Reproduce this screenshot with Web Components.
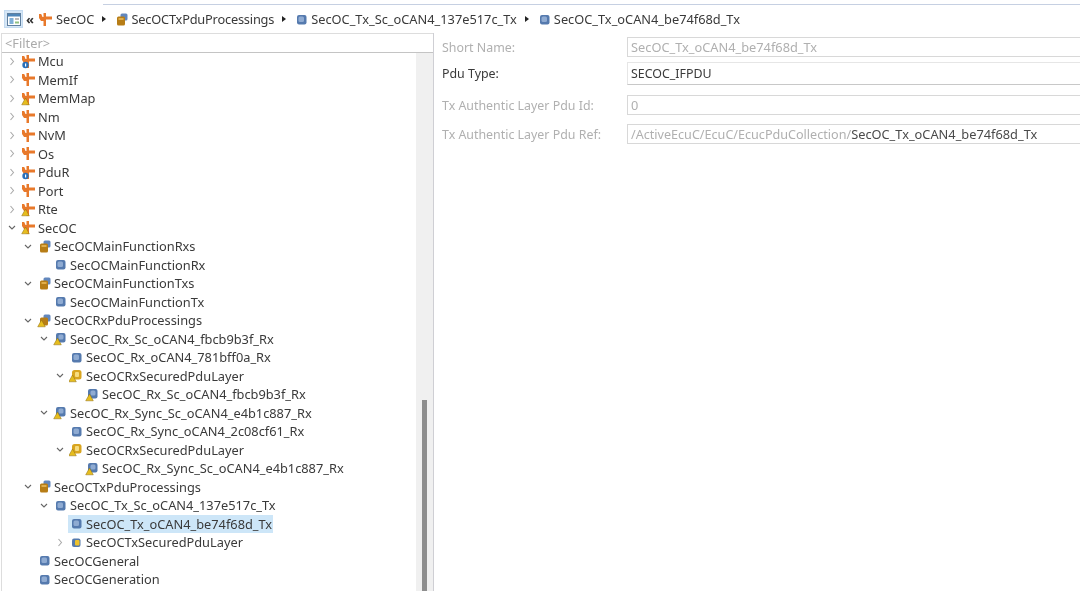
<!DOCTYPE html>
<html>
<head>
<meta charset="utf-8">
<style>
html, body { margin: 0; height: 100%; background: #fff; overflow: hidden; }
body { font: 12.8px "Noto Sans", "Liberation Sans", sans-serif; color: #3a3a3a; }
</style>
</head>
<body>
<ecu-editor></ecu-editor>

<script>
// アイコン定義
const fork = '<path d="M1 2H3.200L4.500 5H5.500V1H8V4.500H14V7.500H8V14H5.500V9H3L1 6Z" fill="#e8792b"/>';
const warn = (x = 0, y = 7) => `<path d="M${x + 3.500} ${y}l3.800 6.800h-7.600z" fill="#e6bd1e" stroke="#8c6c12" stroke-width=".5"/>`;
const cube = '<rect x="3" y="3" width="9.500" height="9.500" rx="2" fill="#557aae"/><rect x="4.500" y="4.500" width="5.500" height="5.500" rx="1.500" fill="#8fabd2"/>';
const ICONS = {
  module: fork,
  'module-info': fork + '<circle cx="4.500" cy="11" r="3.200" fill="#2a6fb8"/><rect x="4" y="9.500" width="1.200" height="3" fill="#fff"/>',
  'module-warn': fork + warn(1, 7),
  group: '<rect x="6.500" y="1.500" width="7" height="7" rx="1.500" fill="#6287bd"/><rect x="3" y="4.500" width="8" height="9" rx="1.500" fill="#b77d16"/><rect x="4.500" y="6" width="5" height="2" fill="#e0ae4c"/>',
  'group-warn': '<rect x="6.500" y="1.500" width="7" height="7" rx="1.500" fill="#6287bd"/><rect x="3" y="4.500" width="8" height="8" rx="1.500" fill="#b77d16"/>' + warn(1, 7),
  item: cube,
  'item-warn': '<rect x="3" y="2" width="9.500" height="9.500" rx="2" fill="#557aae"/><rect x="5.500" y="3.500" width="5" height="5" rx="1.500" fill="#8fabd2"/>' + warn(1, 7),
  'layer-warn': '<rect x="3" y="2" width="9.500" height="9.500" rx="2.500" fill="#d9a520"/><rect x="6" y="4" width="4" height="5" rx="1" fill="#f7dd80"/>' + warn(0, 7),
  layer: '<rect x="3" y="3.500" width="8.500" height="8.500" rx="2" fill="#557aae"/><rect x="6" y="5" width="4.500" height="5.500" rx="1" fill="#eec22c"/>'
};

class NodeIcon extends HTMLElement {
  connectedCallback() {
    if (this.shadowRoot) return;
    this.attachShadow({ mode: 'open' });
    const name = this.getAttribute('name') || 'item';
    this.shadowRoot.innerHTML = `
      <style>
        :host { display: inline-flex; width: 15px; height: 15px; flex: none; }
        svg { width: 15px; height: 15px; }
      </style>
      <svg viewBox="0 0 15 15">${ICONS[name]}</svg>`;
  }
}
customElements.define('node-icon', NodeIcon);

class CrumbItem extends HTMLElement {
  connectedCallback() {
    if (this.shadowRoot) return;
    this.attachShadow({ mode: 'open' });
    const name = this.getAttribute('icon');
    this.shadowRoot.innerHTML = `
      <style>
        :host { display: inline-flex; align-items: center; gap: 2px; }
        :host([icon="module"]) { gap: 3px; }
        :host([icon="group"]) { letter-spacing: -.2px; }
      </style>
      <node-icon name="${name}"></node-icon><slot></slot>`;
  }
}
customElements.define('crumb-item', CrumbItem);

const crumbTemplate = document.createElement('template');
crumbTemplate.innerHTML = `
<style>
:host { display: block; height: 33px; box-sizing: border-box; color: #3a3a3a; }
.rule { height: 1px; margin: 4px 0 0 103px; background: #c6d0e2; }
.bar { display: flex; align-items: center; height: 28px; padding-left: 4px; }
.toggle { width: 19px; height: 18px; box-sizing: border-box; background: #d5e6f6; border: 1px solid #c3daf0; display: flex; align-items: center; justify-content: center; margin-right: 3px; }
.back { font-size: 13px; font-weight: 700; margin-right: 4px; color: #333; }
.sep { width: 0; height: 0; border-left: 4px solid #222; border-top: 3px solid transparent; border-bottom: 3px solid transparent; margin: 0 8px; }
</style>
<div class="rule"></div>
<div class="bar">
  <span class="toggle">
    <svg width="14" height="13" viewBox="0 0 14 13"><rect x=".5" y=".5" width="13" height="12" fill="#fff" stroke="#5f7f9f"/><rect x="1" y="1" width="12" height="2.500" fill="#4f86b8"/><rect x="2.500" y="5" width="4" height="6" fill="#7fb0d8"/><rect x="8" y="5" width="4" height="2" fill="#bbb"/><rect x="8" y="8.500" width="4" height="2" fill="#8fbf80"/></svg>
  </span>
  <span class="back">«</span>
  <crumb-item icon="module">SecOC</crumb-item><span class="sep"></span>
  <crumb-item icon="group">SecOCTxPduProcessings</crumb-item><span class="sep"></span>
  <crumb-item icon="item">SecOC_Tx_Sc_oCAN4_137e517c_Tx</crumb-item><span class="sep"></span>
  <crumb-item icon="item">SecOC_Tx_oCAN4_be74f68d_Tx</crumb-item>
</div>`;

class CrumbBar extends HTMLElement {
  constructor() {
    super();
    this.attachShadow({ mode: 'open' });
    this.shadowRoot.appendChild(crumbTemplate.content.cloneNode(true));
  }
}
customElements.define('crumb-bar', CrumbBar);

class TreeRow extends HTMLElement {
  connectedCallback() {
    if (this.shadowRoot) return;
    this.attachShadow({ mode: 'open' });
    const depth = Number(this.getAttribute('depth') || 0);
    const state = this.getAttribute('state') || '';
    const icon = this.getAttribute('icon');
    const chevron = state === 'open'
      ? '<path d="M1 3l3 3 3-3" fill="none" stroke="#666" stroke-width="1.100"/>'
      : state === 'closed'
        ? '<path d="M2.500 1l3 3.500-3 3.500" fill="none" stroke="#aaa" stroke-width="1.100"/>'
        : '';
    this.shadowRoot.innerHTML = `
      <style>
        :host { display: flex; align-items: center; height: 18.5px; padding-left: ${8 + depth * 16}px; white-space: nowrap; }
        .tw { width: 8px; height: 9px; flex: none; margin: 0 4px 0 -2px; }
        .cell { display: flex; align-items: center; gap: 2px; height: 18px; padding: 0 1px; }
        :host([selected]) .cell { background: #cde6f8; }
      </style>
      <svg class="tw" viewBox="0 0 8 9">${chevron}</svg>
      <div class="cell"><node-icon name="${icon}"></node-icon><slot></slot></div>`;
  }
}
customElements.define('tree-row', TreeRow);

// ツリーの内容
const TREE = [
  [0, 'closed', 'module-info', 'Mcu'],
  [0, 'closed', 'module', 'MemIf'],
  [0, 'closed', 'module-warn', 'MemMap'],
  [0, 'closed', 'module', 'Nm'],
  [0, 'closed', 'module', 'NvM'],
  [0, 'closed', 'module', 'Os'],
  [0, 'closed', 'module-info', 'PduR'],
  [0, 'closed', 'module', 'Port'],
  [0, 'closed', 'module-warn', 'Rte'],
  [0, 'open', 'module-warn', 'SecOC'],
  [1, 'open', 'group', 'SecOCMainFunctionRxs'],
  [2, '', 'item', 'SecOCMainFunctionRx'],
  [1, 'open', 'group', 'SecOCMainFunctionTxs'],
  [2, '', 'item', 'SecOCMainFunctionTx'],
  [1, 'open', 'group-warn', 'SecOCRxPduProcessings'],
  [2, 'open', 'item-warn', 'SecOC_Rx_Sc_oCAN4_fbcb9b3f_Rx'],
  [3, '', 'item', 'SecOC_Rx_oCAN4_781bff0a_Rx'],
  [3, 'open', 'layer-warn', 'SecOCRxSecuredPduLayer'],
  [4, '', 'item-warn', 'SecOC_Rx_Sc_oCAN4_fbcb9b3f_Rx'],
  [2, 'open', 'item-warn', 'SecOC_Rx_Sync_Sc_oCAN4_e4b1c887_Rx'],
  [3, '', 'item', 'SecOC_Rx_Sync_oCAN4_2c08cf61_Rx'],
  [3, 'open', 'layer-warn', 'SecOCRxSecuredPduLayer'],
  [4, '', 'item-warn', 'SecOC_Rx_Sync_Sc_oCAN4_e4b1c887_Rx'],
  [1, 'open', 'group', 'SecOCTxPduProcessings'],
  [2, 'open', 'item', 'SecOC_Tx_Sc_oCAN4_137e517c_Tx'],
  [3, '', 'item', 'SecOC_Tx_oCAN4_be74f68d_Tx', true],
  [3, 'closed', 'layer', 'SecOCTxSecuredPduLayer'],
  [1, '', 'item', 'SecOCGeneral'],
  [1, '', 'item', 'SecOCGeneration'],
];

class TreePane extends HTMLElement {
  constructor() {
    super();
    this.attachShadow({ mode: 'open' });
    this.shadowRoot.innerHTML = `
      <style>
        :host { display: flex; flex-direction: column; width: 433px; height: 100%; flex: none; box-sizing: border-box; border-left: 1px solid #ddd; border-right: 1px solid #cfcfd4; margin-left: 1px; overflow: hidden; }
        .filter { height: 18px; flex: none; border-top: 1px solid #ddd; border-bottom: 1px solid #c4c4c4; color: #aaa; padding-left: 3px; line-height: 18px; }
        .body { flex: 1; display: flex; min-height: 0; }
        .rows { flex: 1; overflow: hidden; margin-top: -1px; }
        .track { width: 17px; flex: none; background: #f0f0f0; padding: 347px 0 0 6px; box-sizing: border-box; }
        .thumb { width: 5px; height: 300px; background: #8e8e8e; }
      </style>
      <div class="filter">&lt;Filter&gt;</div>
      <div class="body">
        <div class="rows"></div>
        <div class="track"><div class="thumb"></div></div>
      </div>`;
    const rows = this.shadowRoot.querySelector('.rows');
    for (const [depth, state, icon, text, selected] of TREE) {
      const row = document.createElement('tree-row');
      row.setAttribute('depth', depth);
      row.setAttribute('state', state);
      row.setAttribute('icon', icon);
      if (selected) row.setAttribute('selected', '');
      row.textContent = text;
      rows.append(row);
    }
  }
}
customElements.define('tree-pane', TreePane);

class FormField extends HTMLElement {
  connectedCallback() {
    if (this.shadowRoot) return;
    this.attachShadow({ mode: 'open' });
    const h = this.getAttribute('h');
    this.shadowRoot.innerHTML = `
      <style>
        :host { display: grid; grid-template-columns: 185px 1fr; align-items: center; height: ${h}px; color: #b0b0b0; }
        :host([active]) { color: #3a3a3a; }
        .label { font-size: 12.4px; }
        .box { display: flex; align-items: center; height: 100%; box-sizing: border-box; border: 1px solid #d8d8d8; border-right: 0; padding-left: 3px; white-space: pre; }
        :host([active]) .box { border-color: #e6e6e6; border-bottom-color: #c8c8c8; font-size: 12.4px; }
      </style>
      <div class="label">${this.getAttribute('label')}</div>
      <div class="box"><slot></slot></div>`;
  }
}
customElements.define('form-field', FormField);

class RefPath extends HTMLElement {
  connectedCallback() {
    if (this.shadowRoot) return;
    this.attachShadow({ mode: 'open' });
    this.shadowRoot.innerHTML = `
      <style>
        :host { display: inline-flex; align-items: baseline; }
        .last { color: #4a4a4a; }
        .pre { font-size: 12.6px; }
      </style>
      <span class="pre">${this.getAttribute('prefix')}</span><span class="last"><slot></slot></span>`;
  }
}
customElements.define('ref-path', RefPath);

class FormPane extends HTMLElement {
  constructor() {
    super();
    this.attachShadow({ mode: 'open' });
    this.shadowRoot.innerHTML = `
      <style>
        :host { display: flex; flex-direction: column; flex: 1; min-width: 0; padding: 4px 0 0 8px; }
        .pdu { margin-top: 5px; }
        .id { margin-top: 10px; }
        .ref { margin-top: 9px; }
      </style>
      <form-field label="Short Name:" h="20">SecOC_Tx_oCAN4_be74f68d_Tx</form-field>
      <form-field class="pdu" label="Pdu Type:" h="23" active>SECOC_IFPDU</form-field>
      <form-field class="id" label="Tx Authentic Layer Pdu Id:" h="20">0</form-field>
      <form-field class="ref" label="Tx Authentic Layer Pdu Ref:" h="20"><ref-path prefix="/ActiveEcuC/EcuC/EcucPduCollection/">SecOC_Tx_oCAN4_be74f68d_Tx</ref-path></form-field>`;
  }
}
customElements.define('form-pane', FormPane);

class EcuEditor extends HTMLElement {
  constructor() {
    super();
    this.attachShadow({ mode: 'open' });
    this.shadowRoot.innerHTML = `
      <style>
        :host { display: flex; flex-direction: column; height: 591px; width: 1080px; filter: blur(.4px); }
        .split { flex: 1; display: flex; min-height: 0; }
      </style>
      <crumb-bar></crumb-bar>
      <div class="split"><tree-pane></tree-pane><form-pane></form-pane></div>`;
  }
}
customElements.define('ecu-editor', EcuEditor);
</script>
</body>
</html>
